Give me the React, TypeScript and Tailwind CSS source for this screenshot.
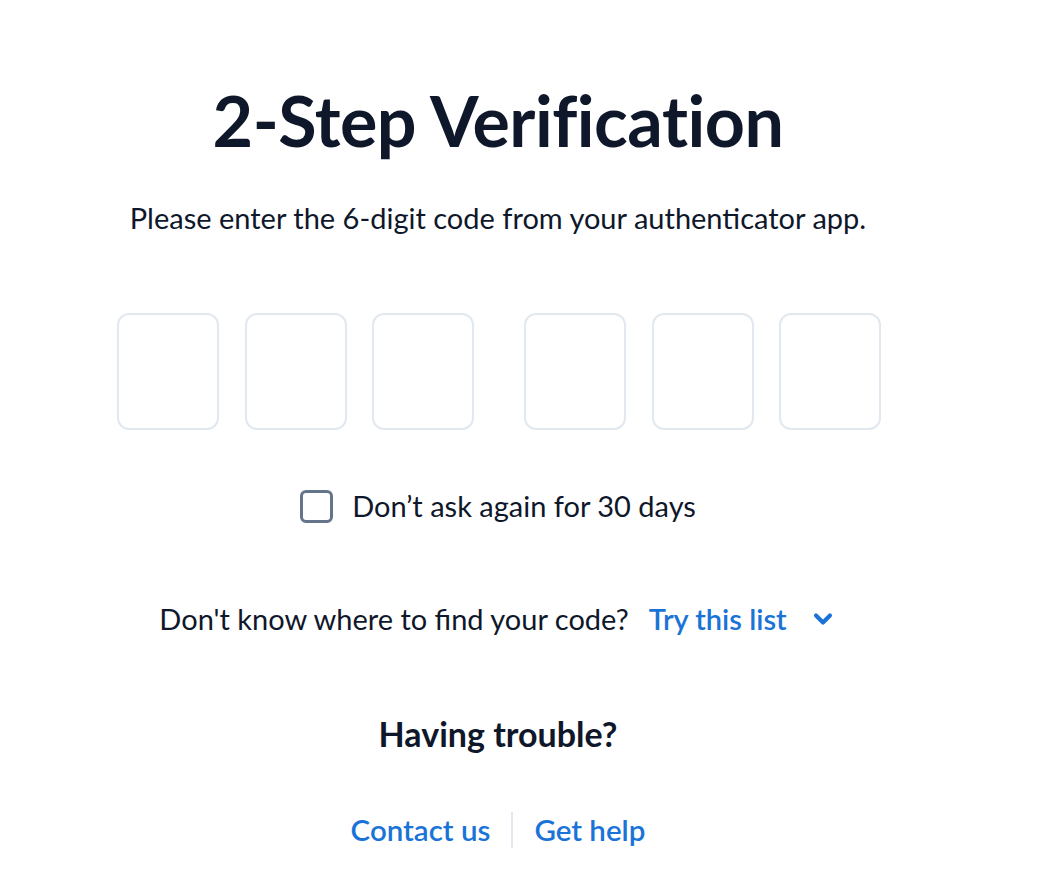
import { ChevronDown } from "lucide-react";

function CodeBox() {
    return <div className="w-[102px] h-[117px] rounded-xl border-2 border-[#e2e8f0] bg-white"></div>;
}

export default function App() {
    return (
        <div className="min-h-screen bg-white font-['Lato','Liberation_Sans',sans-serif] text-[#0f172a]">
            <div className="w-[996px] flex flex-col items-center pt-[80px]">
                <h1 className="text-[70px] leading-[80px] font-bold tracking-[-0.5px]">2-Step Verification</h1>
                <p className="mt-[40px] text-[29px] leading-[36px]">Please enter the 6-digit code from your authenticator app.</p>

                <div className="mt-[77px] ml-[2px] flex items-center gap-[50px]">
                    <div className="flex gap-[25.5px]">
                        <CodeBox />
                        <CodeBox />
                        <CodeBox />
                    </div>
                    <div className="flex gap-[25.5px]">
                        <CodeBox />
                        <CodeBox />
                        <CodeBox />
                    </div>
                </div>

                <label className="mt-[58px] flex items-center gap-[19px] text-[29px] leading-[36px]">
                    <span className="w-[33px] h-[33px] rounded-md border-[3px] border-[#64748b]"></span>
                    Don’t ask again for 30 days
                </label>

                <div className="mt-[77px] flex items-center text-[29px] leading-[36px]">
                    <span>Don't know where to find your code?</span>
                    <span className="ml-[20px] text-[#1a73d6] font-semibold">Try this list</span>
                    <ChevronDown className="ml-[22px] text-[#1a73d6]" size={28} strokeWidth={3.5} />
                </div>

                <h2 className="mt-[77px] text-[34px] leading-[40px] font-bold">Having trouble?</h2>

                <div className="mt-[58px] flex items-center text-[29.5px] leading-[36px] font-semibold text-[#1a73d6]">
                    <span>Contact us</span>
                    <span className="mx-[21px] w-[2px] h-[36px] bg-[#e2e8f0]"></span>
                    <span>Get help</span>
                </div>
            </div>
        </div>
    );
}
